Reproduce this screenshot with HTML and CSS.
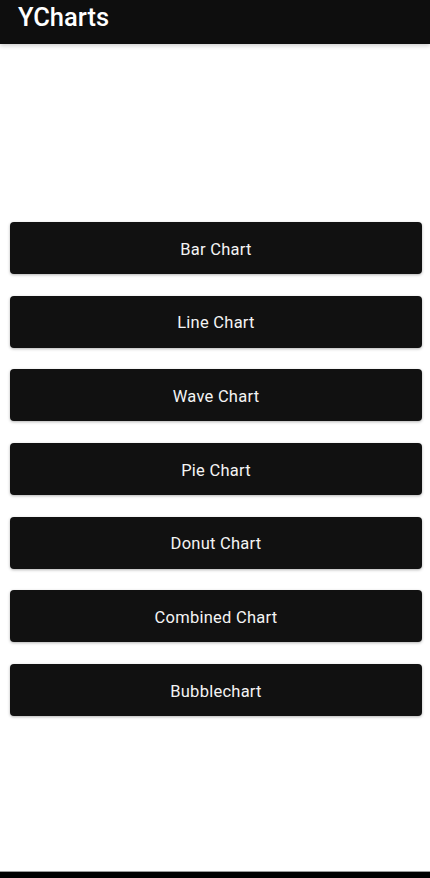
FILE: index.html
```html
<!DOCTYPE html>
<html lang="en">
<head>
    <meta charset="utf-8">
    <title>YCharts</title>
    <link rel="stylesheet" href="styles.css">
</head>
<body>
<div id="appdiv">
    <div id="topbar">
        <h1 id="apptitle">YCharts</h1>
    </div>
    <div id="buttonlist">
        <button class="chartbtn">Bar Chart</button>
        <button class="chartbtn">Line Chart</button>
        <button class="chartbtn">Wave Chart</button>
        <button class="chartbtn">Pie Chart</button>
        <button class="chartbtn">Donut Chart</button>
        <button class="chartbtn">Combined Chart</button>
        <button class="chartbtn">Bubblechart</button>
    </div>
    <div id="navbar"></div>
</div>
</body>
</html>
```

FILE: styles.css
```css
html, body {
    margin: 0;
    padding: 0;
    background-color: #ffffff;
    font-family: Roboto, "Noto Sans", sans-serif;
}

#appdiv {
    display: flex;
    flex-direction: column;
    height: 878px;
    overflow: hidden;
}

#topbar {
    height: 44px;
    flex-shrink: 0;
    background-color: #0e0e0e;
    box-shadow: 0 2px 4px rgba(0, 0, 0, 0.18);
    display: flex;
    align-items: center;
    padding-left: 18px;
    position: relative;
    z-index: 1;
}

#apptitle {
    margin: 0;
    margin-top: -10px;
    color: #ffffff;
    font-size: 25.5px;
    font-weight: 500;
}

#buttonlist {
    flex: 1;
    display: flex;
    flex-direction: column;
    gap: 21.7px;
    padding: 178px 8px 0 10px;
}

.chartbtn {
    height: 52px;
    padding-top: 3px;
    border: none;
    border-radius: 4px;
    background-color: #111111;
    color: #f4f4f4;
    font-family: Roboto, "Noto Sans", sans-serif;
    font-size: 16.5px;
    letter-spacing: 0.25px;
    box-shadow: 0 1px 3px rgba(0, 0, 0, 0.3);
}

#navbar {
    height: 6px;
    flex-shrink: 0;
    background-color: #000000;
    border-top: 1px solid #9a9a9a;
}
```
